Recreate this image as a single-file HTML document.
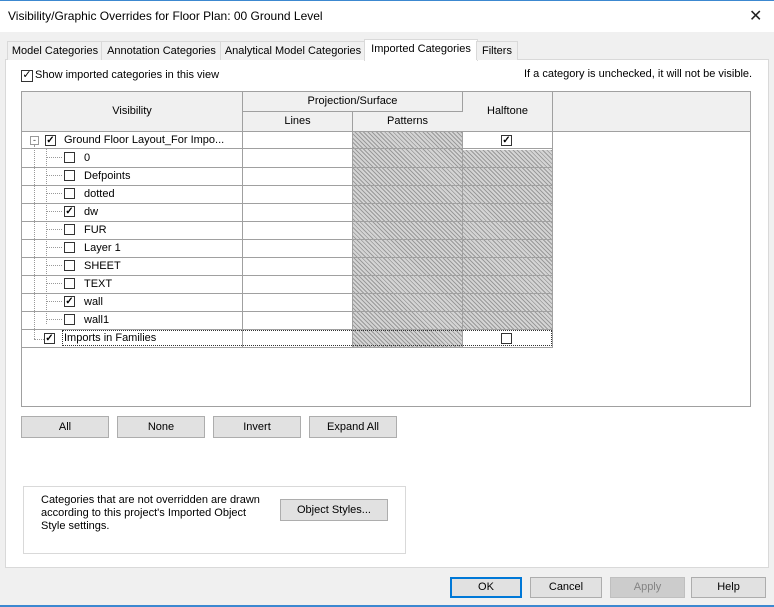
<!DOCTYPE html><html><head><style>
body{margin:0;width:774px;height:607px;background:#f0f0f0;font-family:"Liberation Sans",sans-serif;font-size:11px;color:#000;position:relative;overflow:hidden}
.a{position:absolute}
.title{left:0;top:0;width:774px;height:32px;background:#fff;border-top:1px solid #3c88d0;box-sizing:border-box}
.tab{top:41px;height:18px;border:1px solid #d9d9d9;border-bottom:none;background:#f0f0f0;line-height:18px;text-align:center;font-size:11px}
.panel{left:5px;top:59px;width:764px;height:509px;background:#fff;border:1px solid #d9d9d9;box-sizing:border-box}
.cb{width:11px;height:11px;border:1px solid #333;background:#fff;box-sizing:border-box;font-size:10px;line-height:9px;text-align:center;font-weight:bold}
.hatch{background-color:#d4d4d4;background-image:repeating-linear-gradient(45deg,#9a9a9a 0 1px,transparent 1px 3px)}
.btn{background:#e1e1e1;border:1px solid #adadad;box-sizing:border-box;text-align:center;font-size:11px}
</style></head><body>
<div class="a title"></div>
<div class="a" style="left:8px;top:9px;font-size:12px">Visibility/Graphic Overrides for Floor Plan: 00 Ground Level</div>
<div class="a" style="left:749px;top:6px;font-size:16px;font-weight:300;color:#222">✕</div>
<div class="a panel"></div>
<div class="a tab" style="left:7px;width:94px">Model Categories</div>
<div class="a tab" style="left:101px;width:119px">Annotation Categories</div>
<div class="a tab" style="left:220px;width:144px">Analytical Model Categories</div>
<div class="a tab" style="left:364px;top:39px;height:21px;width:112px;background:#fff;border-color:#d9d9d9">Imported Categories</div>
<div class="a tab" style="left:476px;width:40px">Filters</div>
<div class="a cb" style="left:21px;top:70px;width:12px;height:12px;font-weight:normal;font-size:11px">✓</div>
<div class="a" style="left:35px;top:69px">Show imported categories in this view</div>
<div class="a" style="left:524px;top:68px">If a category is unchecked, it will not be visible.</div>
<div class="a" style="left:21px;top:91px;width:730px;height:316px;border:1px solid #a0a0a0;box-sizing:border-box;background:#fff"></div>
<div class="a" style="left:22px;top:92px;width:728px;height:39px;background:#f0f0f0;border-bottom:1px solid #a0a0a0"></div>
<div class="a" style="left:22px;top:92px;width:220px;height:39px;border-right:1px solid #a0a0a0;line-height:39px;text-align:center">Visibility</div>
<div class="a" style="left:243px;top:92px;width:219px;height:19px;border-right:1px solid #a0a0a0;border-bottom:1px solid #a0a0a0;text-align:center;line-height:19px">Projection/Surface</div>
<div class="a" style="left:243px;top:112px;width:109px;height:19px;border-right:1px solid #a0a0a0;text-align:center;line-height:19px">Lines</div>
<div class="a" style="left:353px;top:112px;width:109px;height:19px;text-align:center;line-height:19px">Patterns</div>
<div class="a" style="left:463px;top:92px;width:89px;height:39px;border-right:1px solid #a0a0a0;text-align:center;line-height:39px">Halftone</div>
<div class="a hatch" style="left:353px;top:132px;width:109px;height:215px"></div>
<div class="a hatch" style="left:463px;top:150px;width:89px;height:180px"></div>
<div class="a" style="left:242px;top:132px;width:1px;height:216px;background:#a0a0a0"></div>
<div class="a" style="left:352px;top:132px;width:1px;height:216px;background:#a0a0a0"></div>
<div class="a" style="left:462px;top:132px;width:1px;height:216px;background:#a0a0a0"></div>
<div class="a" style="left:552px;top:132px;width:1px;height:216px;background:#a0a0a0"></div>
<div class="a" style="left:22px;top:148px;width:531px;border-top:1px solid #a0a0a0"></div>
<div class="a" style="left:22px;top:347px;width:531px;border-top:1px solid #a0a0a0"></div>
<div id="rows"></div>
<div class="a" style="left:30px;top:136px;width:9px;height:9px;border:1px solid #999;box-sizing:border-box;font-size:9px;line-height:6px;text-align:center;color:#333">-</div>
<div class="a cb" style="left:45px;top:135px">✓</div>
<div class="a" style="left:64px;top:134px">Ground Floor Layout_For Impo...</div>
<div class="a cb" style="left:501px;top:135px">✓</div>
<div class="a" style="left:34px;top:145px;height:194px;border-left:1px dotted #999"></div>
<div class="a" style="left:46px;top:149px;height:175px;border-left:1px dotted #999"></div>
<div class="a" style="left:62px;top:330px;width:490px;height:16px;border:1px dotted #333;box-sizing:border-box"></div>
<div class="a" style="left:34px;top:339px;width:10px;border-top:1px dotted #999"></div>
<div class="a cb" style="left:44px;top:333px">✓</div>
<div class="a" style="left:64px;top:332px">Imports in Families</div>
<div class="a cb" style="left:501px;top:333px"></div>
<script>
var n=["0","Defpoints","dotted","dw","FUR","Layer 1","SHEET","TEXT","wall","wall1"],c=[0,0,0,1,0,0,0,0,1,0],h="";
for(var i=0;i<10;i++){var y=149+i*18;
h+='<div class="a" style="left:22px;top:'+(y+18)+'px;width:531px;border-top:1px solid #a0a0a0"></div>';
h+='<div class="a" style="left:47px;top:'+(y+8)+'px;width:15px;border-top:1px dotted #999"></div>';
h+='<div class="a cb" style="left:64px;top:'+(y+3)+'px">'+(c[i]?'✓':'')+'</div>';
h+='<div class="a" style="left:84px;top:'+(y+3)+'px">'+n[i]+'</div>';}
document.getElementById("rows").innerHTML=h;
</script>
<div class="a btn" style="left:21px;top:416px;width:88px;height:22px;line-height:20px">All</div>
<div class="a btn" style="left:117px;top:416px;width:88px;height:22px;line-height:20px">None</div>
<div class="a btn" style="left:213px;top:416px;width:88px;height:22px;line-height:20px">Invert</div>
<div class="a btn" style="left:309px;top:416px;width:88px;height:22px;line-height:20px">Expand All</div>
<div class="a" style="left:23px;top:486px;width:383px;height:68px;border:1px solid #d9d9d9;box-sizing:border-box"></div>
<div class="a" style="left:41px;top:494px;width:225px;line-height:13px;font-size:11px">Categories that are not overridden are drawn according to this project's Imported Object Style settings.</div>
<div class="a btn" style="left:280px;top:499px;width:108px;height:22px;line-height:20px">Object Styles...</div>
<div class="a btn" style="left:450px;top:577px;width:72px;height:21px;line-height:17px;border:2px solid #0078d7">OK</div>
<div class="a btn" style="left:530px;top:577px;width:72px;height:21px;line-height:19px">Cancel</div>
<div class="a btn" style="left:610px;top:577px;width:75px;height:21px;line-height:19px;background:#ccc;border-color:#bfbfbf;color:#838383">Apply</div>
<div class="a btn" style="left:691px;top:577px;width:75px;height:21px;line-height:19px">Help</div>
<div class="a" style="left:0;top:605px;width:774px;height:2px;background:#3c88d0"></div>
</body></html>
